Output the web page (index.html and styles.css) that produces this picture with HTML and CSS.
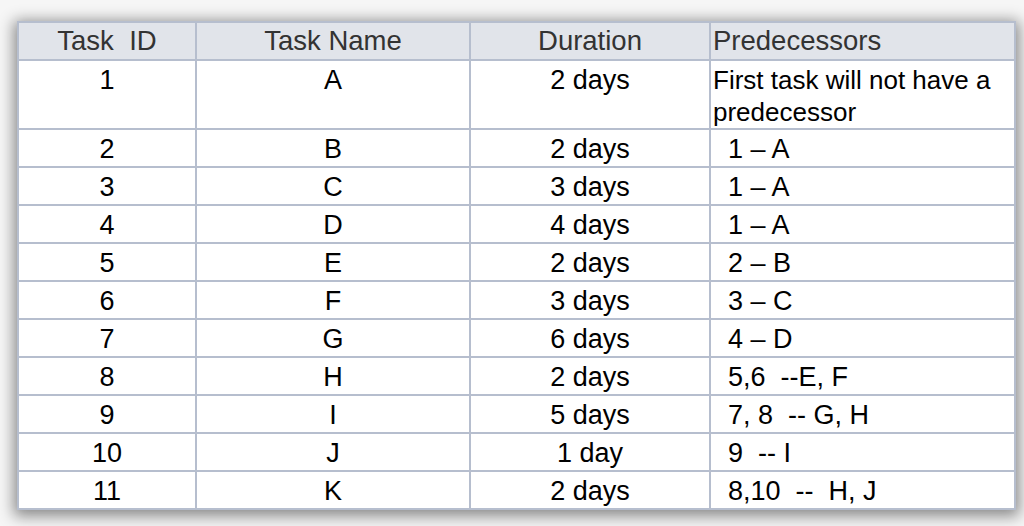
FILE: index.html
```html
<!DOCTYPE html>
<html>
<head>
<meta charset="utf-8">
<link rel="stylesheet" href="styles.css">
</head>
<body>
<table class="tasks">
  <colgroup>
    <col class="c-id"><col class="c-name"><col class="c-dur"><col class="c-pred">
  </colgroup>
  <thead>
    <tr class="head">
      <th class="ctr">Task  ID</th>
      <th class="ctr">Task Name</th>
      <th class="ctr">Duration</th>
      <th class="left">Predecessors</th>
    </tr>
  </thead>
  <tbody>
    <tr class="tall">
      <td class="ctr">1</td><td class="ctr">A</td><td class="ctr">2 days</td>
      <td class="left first">First task will not have a predecessor</td>
    </tr>
    <tr><td class="ctr">2</td><td class="ctr">B</td><td class="ctr">2 days</td><td class="left">  1 – A</td></tr>
    <tr><td class="ctr">3</td><td class="ctr">C</td><td class="ctr">3 days</td><td class="left">  1 – A</td></tr>
    <tr><td class="ctr">4</td><td class="ctr">D</td><td class="ctr">4 days</td><td class="left">  1 – A</td></tr>
    <tr><td class="ctr">5</td><td class="ctr">E</td><td class="ctr">2 days</td><td class="left">  2 – B</td></tr>
    <tr><td class="ctr">6</td><td class="ctr">F</td><td class="ctr">3 days</td><td class="left">  3 – C</td></tr>
    <tr><td class="ctr">7</td><td class="ctr">G</td><td class="ctr">6 days</td><td class="left">  4 – D</td></tr>
    <tr><td class="ctr">8</td><td class="ctr">H</td><td class="ctr">2 days</td><td class="left">  5,6  --E, F</td></tr>
    <tr><td class="ctr">9</td><td class="ctr">I</td><td class="ctr">5 days</td><td class="left">  7, 8  -- G, H</td></tr>
    <tr><td class="ctr">10</td><td class="ctr">J</td><td class="ctr">1 day</td><td class="left">  9  -- I</td></tr>
    <tr><td class="ctr">11</td><td class="ctr">K</td><td class="ctr">2 days</td><td class="left">  8,10  --  H, J</td></tr>
  </tbody>
</table>
</body>
</html>
```

FILE: styles.css
```css
html, body {
  margin: 0;
  padding: 0;
  background: #f6f6f6;
}
body {
  padding: 21px 0 0 17px;
  width: 1024px;
  height: 526px;
  box-sizing: border-box;
  overflow: hidden;
  font-family: "Liberation Sans", Arial, sans-serif;
}
.tasks {
  table-layout: fixed;
  border-collapse: separate;
  border-spacing: 2px;
  background: #b6bece;
  width: 999px;
  box-shadow: 0 3px 14px 3px rgba(0, 0, 0, 0.45);
}
.c-id { width: 176px; }
.c-name { width: 272px; }
.c-dur { width: 238px; }
.c-pred { width: 303px; }
th, td {
  padding: 0;
  vertical-align: top;
  white-space: pre;
  font-size: 27px;
  line-height: 31px;
}
th {
  background: #e1e4ea;
  color: #333333;
  font-weight: normal;
  height: 36px;
  padding-top: 2px;
  box-sizing: border-box;
  font-size: 27.5px;
}
td {
  background: #ffffff;
  color: #000000;
  height: 36px;
  padding-top: 4px;
  box-sizing: border-box;
}
.tall td {
  height: 67px;
}
.ctr { text-align: center; }
.left { text-align: left; padding-left: 2px; }
.first {
  white-space: normal;
  font-size: 26px;
  line-height: 32px;
  padding-top: 3px;
}
```
